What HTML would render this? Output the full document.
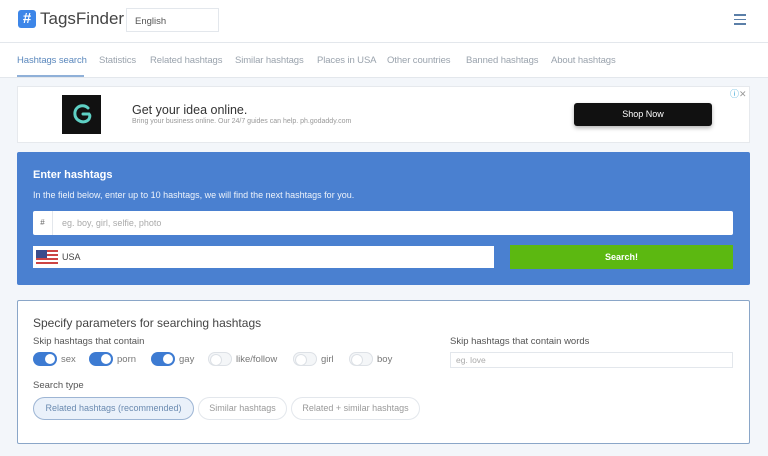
<!DOCTYPE html>
<html><head><meta charset="utf-8"><style>
*{box-sizing:border-box;margin:0;padding:0}
body{width:768px;height:456px;overflow:hidden;background:#f3f6fa;font-family:"Liberation Sans",sans-serif;position:relative;color:#333}
.abs{position:absolute;white-space:nowrap}
.hdr{left:0;top:0;width:768px;height:43px;background:#fff;border-bottom:1px solid #e3e7ec}
.nav{left:0;top:43px;width:768px;height:35px;background:#fff;border-bottom:1px solid #e3e7ec}
.nav span{position:absolute;top:12px;font-size:9.5px;color:#9aa3ad;letter-spacing:-0.1px}
.tog{width:24px;height:14px;border-radius:7px;position:absolute;top:352px}
.tog.on{background:#3d7bd2}
.tog.on::after{content:"";position:absolute;right:2px;top:2px;width:10px;height:10px;border-radius:50%;background:#fff}
.tog.off{background:#f4f6f8;border:1px solid #dde1e6}
.tog.off::after{content:"";position:absolute;left:1px;top:1px;width:10px;height:10px;border-radius:50%;background:#fff;border:1px solid #dde1e6}
.tl{position:absolute;top:354px;font-size:9.5px;color:#777}
.pill{position:absolute;top:397px;height:23px;border-radius:12px;border:1px solid #e3e7ec;font-size:9px;color:#999;line-height:21px;background:#fff;text-align:center;white-space:nowrap}
</style></head><body>
<div class="abs hdr">
 <div class="abs" style="left:18px;top:10px;width:18px;height:18px;background:#3d86e8;border-radius:3px;color:#fff;font-weight:bold;font-size:15px;text-align:center;line-height:18px">#</div>
 <div class="abs" style="left:40px;top:9px;font-size:17px;color:#444">TagsFinder</div>
 <div class="abs" style="left:126px;top:8px;width:93px;height:24px;border:1px solid #e3e7ec;font-size:9.5px;color:#555;padding:7px 0 0 8px">English</div>
 <div class="abs" style="left:734px;top:14px;width:12px">
  <div style="height:1.5px;background:#5b7fa8;margin-bottom:3px"></div><div style="height:1.5px;background:#5b7fa8;margin-bottom:3px"></div><div style="height:1.5px;background:#5b7fa8"></div></div>
</div>
<div class="abs nav">
 <span style="left:17px;color:#5b88bd">Hashtags search</span>
 <div class="abs" style="left:17px;top:32px;width:67px;height:2px;background:#8fb0d8"></div>
 <span style="left:99px">Statistics</span>
 <span style="left:150px">Related hashtags</span>
 <span style="left:235px">Similar hashtags</span>
 <span style="left:317px">Places in USA</span>
 <span style="left:387px">Other countries</span>
 <span style="left:466px">Banned hashtags</span>
 <span style="left:551px">About hashtags</span>
</div>
<div class="abs" style="left:17px;top:86px;width:733px;height:57px;background:#fff;border:1px solid #e6e9ed">
 <div class="abs" style="left:44px;top:8px;width:39px;height:39px;background:#111">
  <svg width="39" height="39" viewBox="0 0 39 39"><path d="M26 13c-3-3-8-3-11 0s-3 9 1 12 9 2 11-1c1-2 1-4 0-5h-6" fill="none" stroke="#5ed0c4" stroke-width="3" stroke-linecap="round"/></svg></div>
 <div class="abs" style="left:114px;top:16px;font-size:12.5px;color:#333">Get your idea online.</div>
 <div class="abs" style="left:114px;top:31px;font-size:7px;color:#999">Bring your business online. Our 24/7 guides can help. ph.godaddy.com</div>
 <div class="abs" style="left:556px;top:16px;width:138px;height:23px;background:#111;border-radius:3px;color:#fff;font-size:9px;text-align:center;line-height:23px;box-shadow:0 2px 4px rgba(0,0,0,.3)">Shop Now</div>
 <div class="abs" style="left:712px;top:0;font-size:9px;color:#3aa6d6">ⓘ<span style="color:#999">✕</span></div>
</div>
<div class="abs" style="left:17px;top:152px;width:733px;height:133px;background:#4a80d0;border-radius:2px">
 <div class="abs" style="left:16px;top:17px;font-size:11px;font-weight:bold;color:#fff">Enter hashtags</div>
 <div class="abs" style="left:16px;top:38px;font-size:9px;color:#eef3fb">In the field below, enter up to 10 hashtags, we will find the next hashtags for you.</div>
 <div class="abs" style="left:16px;top:59px;width:700px;height:24px;background:#fff;border-radius:2px">
  <div class="abs" style="left:0;top:0;width:20px;height:24px;border-right:1px solid #e3e7ec;font-size:8px;color:#666;text-align:center;line-height:24px">#</div>
  <div class="abs" style="left:29px;top:7px;font-size:9px;color:#aaa">eg. boy, girl, selfie, photo</div>
 </div>
 <div class="abs" style="left:16px;top:94px;width:461px;height:22px;background:#fff">
  <div class="abs" style="left:3px;top:4px;width:22px;height:14px;background:repeating-linear-gradient(#c44 0 2px,#fff 2px 4px)"><div style="width:11px;height:8px;background:#3b4c8c"></div></div>
  <div class="abs" style="left:29px;top:6px;font-size:9px;color:#444">USA</div>
 </div>
 <div class="abs" style="left:493px;top:93px;width:223px;height:24px;background:#5cb811;color:#fff;font-size:9px;font-weight:bold;text-align:center;line-height:24px">Search!</div>
</div>
<div class="abs" style="left:17px;top:300px;width:733px;height:144px;background:#fff;border:1px solid #8aa6c8;border-radius:2px"></div>
<div class="abs" style="left:33px;top:316px;font-size:12px;color:#444">Specify parameters for searching hashtags</div>
<div class="abs" style="left:33px;top:336px;font-size:9.5px;color:#555">Skip hashtags that contain</div>
<div class="tog on" style="left:33px"></div><span class="tl" style="left:61px">sex</span>
<div class="tog on" style="left:89px"></div><span class="tl" style="left:117px">porn</span>
<div class="tog on" style="left:151px"></div><span class="tl" style="left:179px">gay</span>
<div class="tog off" style="left:208px"></div><span class="tl" style="left:236px">like/follow</span>
<div class="tog off" style="left:293px"></div><span class="tl" style="left:321px">girl</span>
<div class="tog off" style="left:349px"></div><span class="tl" style="left:377px">boy</span>
<div class="abs" style="left:450px;top:336px;font-size:9.5px;color:#555">Skip hashtags that contain words</div>
<div class="abs" style="left:450px;top:352px;width:283px;height:16px;border:1px solid #e3e7ec;font-size:8.5px;color:#aaa;padding:2px 0 0 5px">eg. love</div>
<div class="abs" style="left:33px;top:380px;font-size:9.5px;color:#555">Search type</div>
<div class="pill" style="left:33px;width:161px;background:#eaf1fa;border-color:#9db5d4;color:#6a8ab0">Related hashtags (recommended)</div>
<div class="pill" style="left:198px;width:89px">Similar hashtags</div>
<div class="pill" style="left:291px;width:129px">Related + similar hashtags</div>
</body></html>
